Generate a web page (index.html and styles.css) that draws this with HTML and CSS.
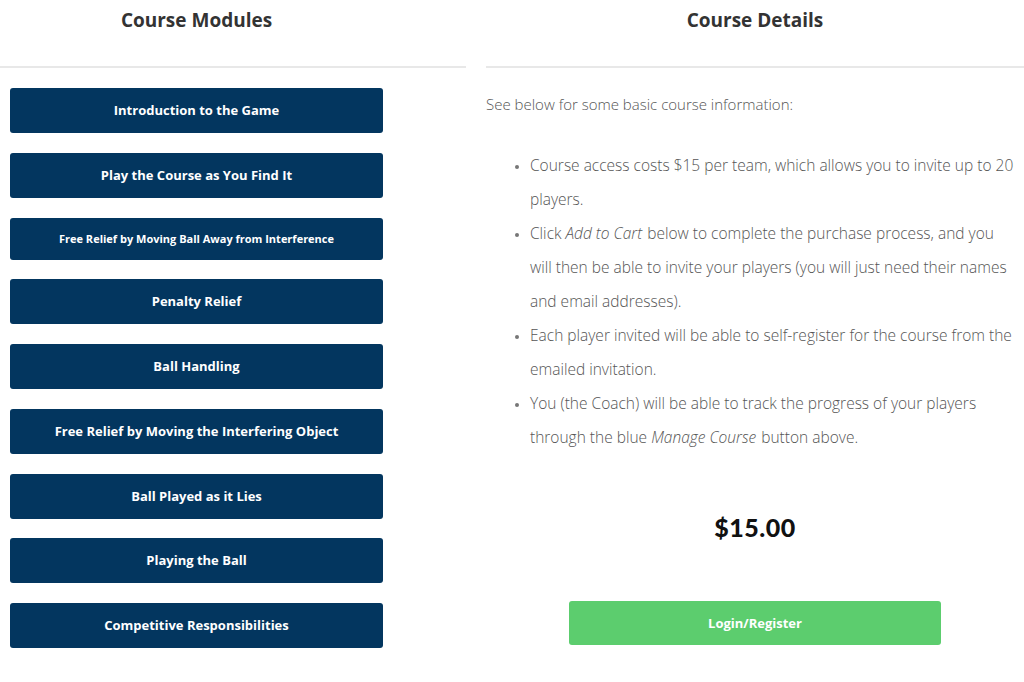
FILE: index.html
```html
<!DOCTYPE html>
<html lang="en">
<head>
<meta charset="utf-8">
<title>Course</title>
<link rel="stylesheet" href="styles.css">
</head>
<body>
<div class="page">
  <section class="modules">
    <header class="col-head modules-head"><h2>Course Modules</h2></header>
    <div class="module-list">
      <a class="module">Introduction to the Game</a>
      <a class="module">Play the Course as You Find It</a>
      <a class="module small">Free Relief by Moving Ball Away from Interference</a>
      <a class="module">Penalty Relief</a>
      <a class="module">Ball Handling</a>
      <a class="module">Free Relief by Moving the Interfering Object</a>
      <a class="module">Ball Played as it Lies</a>
      <a class="module">Playing the Ball</a>
      <a class="module">Competitive Responsibilities</a>
    </div>
  </section>
  <section class="details">
    <header class="col-head"><h2>Course Details</h2></header>
    <p class="intro">See below for some basic course information:</p>
    <ul class="info">
      <li>Course access costs $15 per team, which allows you to invite up to 20 players.</li>
      <li>Click <em>Add to Cart</em> below to complete the purchase process, and you will then be able to invite your players (you will just need their names and email addresses).</li>
      <li>Each player invited will be able to self-register for the course from the emailed invitation.</li>
      <li>You (the Coach) will be able to track the progress of your players through the blue <em>Manage Course</em> button above.</li>
    </ul>
    <div class="price">$15.00</div>
    <div class="buy"><a class="login">Login/Register</a></div>
  </section>
</div>
</body>
</html>
```

FILE: styles.css
```css
html, body {
  margin: 0;
  padding: 0;
  background: #ffffff;
}
body {
  font-family: "Open Sans", "Liberation Sans", sans-serif;
}
.page {
  display: flex;
  width: 1024px;
}
.modules {
  width: 466px;
  flex: none;
}
.details {
  flex: 1;
  margin-left: 20px;
}
.col-head {
  height: 68px;
  border-bottom: 2px solid #e8e8e8;
  box-sizing: border-box;
  padding-top: 5px;
}
.col-head h2 {
  margin: 0;
  text-align: center;
  font-family: "Open Sans", sans-serif;
  font-weight: 700;
  font-size: 19px;
  line-height: 30px;
  color: #333333;
}
.modules-head h2 {
  width: 393px;
}
.module-list {
  padding: 20px 0 0 10px;
  width: 373px;
  display: flex;
  flex-direction: column;
  gap: 19.75px;
}
.module {
  display: block;
  background: #03365f;
  color: #ffffff;
  border-radius: 3px;
  text-align: center;
  font-family: "Open Sans", sans-serif;
  font-weight: 700;
  font-size: 13px;
  line-height: 17px;
  padding: 14px 10px;
}
.module.small {
  font-size: 11px;
  line-height: 14px;
}
.intro {
  margin: 19px 0 0 0;
  font-size: 15px;
  font-weight: 300;
  line-height: 34px;
  color: #555555;
}
.info {
  margin: 27px 0 0 0;
  padding: 0 6px 0 44px;
  font-size: 15.5px;
  font-weight: 300;
  line-height: 34px;
  color: #555555;
}
.info em {
  padding-right: 1px;
}
.info li::marker {
  font-size: 12px;
  color: #777777;
}
.price {
  margin-top: 55px;
  text-align: center;
  font-family: "Lato", sans-serif;
  font-weight: 900;
  font-size: 25px;
  line-height: 36px;
  color: #111111;
  letter-spacing: 0.5px;
}
.buy {
  margin-top: 56px;
  display: flex;
  justify-content: center;
}
.login {
  display: block;
  width: 372px;
  background: #5ccd6e;
  color: #ffffff;
  border-radius: 3px;
  text-align: center;
  font-family: "Open Sans", sans-serif;
  font-weight: 700;
  font-size: 13px;
  line-height: 18px;
  padding: 13px 0;
}
```
